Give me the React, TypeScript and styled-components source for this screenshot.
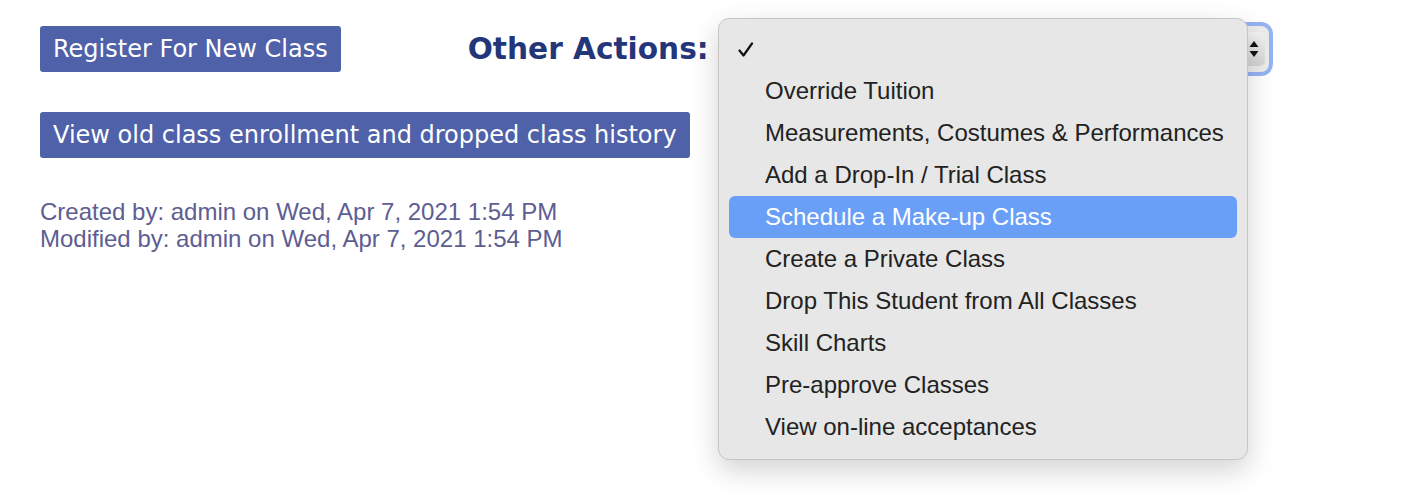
import React from "react";
import styled, { createGlobalStyle } from "styled-components";

const GlobalStyle = createGlobalStyle`
  html, body {
    margin: 0;
    padding: 0;
    background: #ffffff;
  }
`;

const Page = styled.div`
  position: relative;
  width: 1402px;
  height: 494px;
  padding: 26px 0 0 40px;
  box-sizing: border-box;
  overflow: hidden;
`;

const TopRow = styled.div`
  display: flex;
  align-items: center;
  height: 46px;
`;

const ActionButton = styled.button`
  display: block;
  height: 46px;
  padding: 0 13px;
  background: #4f61a8;
  color: #ffffff;
  border: none;
  border-radius: 3px;
  font-family: "DejaVu Sans", Verdana, sans-serif;
  font-size: 24px;
  white-space: nowrap;
  cursor: pointer;
`;

const SecondButton = styled(ActionButton)`
  margin-top: 40px;
`;

const ActionsGroup = styled.div`
  display: flex;
  align-items: center;
  margin-left: 127px;
  gap: 14px;
`;

const ActionsLabel = styled.label`
  font-family: "DejaVu Sans", Verdana, sans-serif;
  font-weight: bold;
  font-size: 29.6px;
  color: #24367a;
  white-space: nowrap;
`;

const SelectBox = styled.div`
  position: relative;
  width: 546px;
  height: 46px;
  border-radius: 8px;
  background: #ececec;
  box-shadow: 0 0 0 4px #94b3f2;
`;

const Stepper = styled.div`
  position: absolute;
  right: 4px;
  top: 6px;
  width: 22px;
  height: 34px;
  border-radius: 5px;
  background: linear-gradient(#f4f4f4, #d4d4d4);
  display: flex;
  align-items: center;
  justify-content: center;
`;

const Meta = styled.div`
  margin-top: 40px;
  font-family: "Liberation Sans", Arial, sans-serif;
  font-size: 24px;
  line-height: 27px;
  color: #5d5d92;
`;

const Menu = styled.ul`
  position: absolute;
  left: 718px;
  top: 18px;
  width: 530px;
  margin: 0;
  padding: 9px 10px 11px;
  box-sizing: border-box;
  list-style: none;
  background: #e6e7e6;
  border: 1px solid #c6c6c6;
  border-radius: 11px;
  box-shadow: 0 10px 28px rgba(0, 0, 0, 0.18);
`;

const MenuItem = styled.li<{ $active?: boolean }>`
  position: relative;
  height: 42px;
  display: flex;
  align-items: center;
  padding-left: 36px;
  border-radius: 6px;
  font-family: "Liberation Sans", Arial, sans-serif;
  font-size: 24px;
  color: ${(p) => (p.$active ? "#ffffff" : "#222222")};
  background: ${(p) => (p.$active ? "#6a9ff8" : "transparent")};
  white-space: nowrap;
`;

const Check = styled.svg`
  position: absolute;
  left: 9px;
  top: 14px;
`;

const options = [
  "",
  "Override Tuition",
  "Measurements, Costumes & Performances",
  "Add a Drop-In / Trial Class",
  "Schedule a Make-up Class",
  "Create a Private Class",
  "Drop This Student from All Classes",
  "Skill Charts",
  "Pre-approve Classes",
  "View on-line acceptances",
];

export default function App() {
  const active = 4;
  return (
    <>
      <GlobalStyle />
      <Page>
        <TopRow>
          <ActionButton>Register For New Class</ActionButton>
          <ActionsGroup>
            <ActionsLabel>Other Actions:</ActionsLabel>
            <SelectBox>
              <Stepper>
                <svg width="10" height="20" viewBox="0 0 10 20">
                  <path d="M5 2 L9.5 8 L0.5 8 Z" fill="#111" />
                  <path d="M5 18 L9.5 12 L0.5 12 Z" fill="#111" />
                </svg>
              </Stepper>
            </SelectBox>
          </ActionsGroup>
        </TopRow>
        <SecondButton>View old class enrollment and dropped class history</SecondButton>
        <Meta>
          <div>Created by: admin on Wed, Apr 7, 2021 1:54 PM</div>
          <div>Modified by: admin on Wed, Apr 7, 2021 1:54 PM</div>
        </Meta>
        <Menu>
          {options.map((o, i) => (
            <MenuItem key={i} $active={i === active}>
              {i === 0 && (
                <Check width="16" height="16" viewBox="0 0 16 16">
                  <path
                    d="M1.5 8.5 L5.5 13.5 L14 1.5"
                    fill="none"
                    stroke="#111"
                    strokeWidth="2.2"
                    strokeLinecap="round"
                    strokeLinejoin="round"
                  />
                </Check>
              )}
              {o}
            </MenuItem>
          ))}
        </Menu>
      </Page>
    </>
  );
}
